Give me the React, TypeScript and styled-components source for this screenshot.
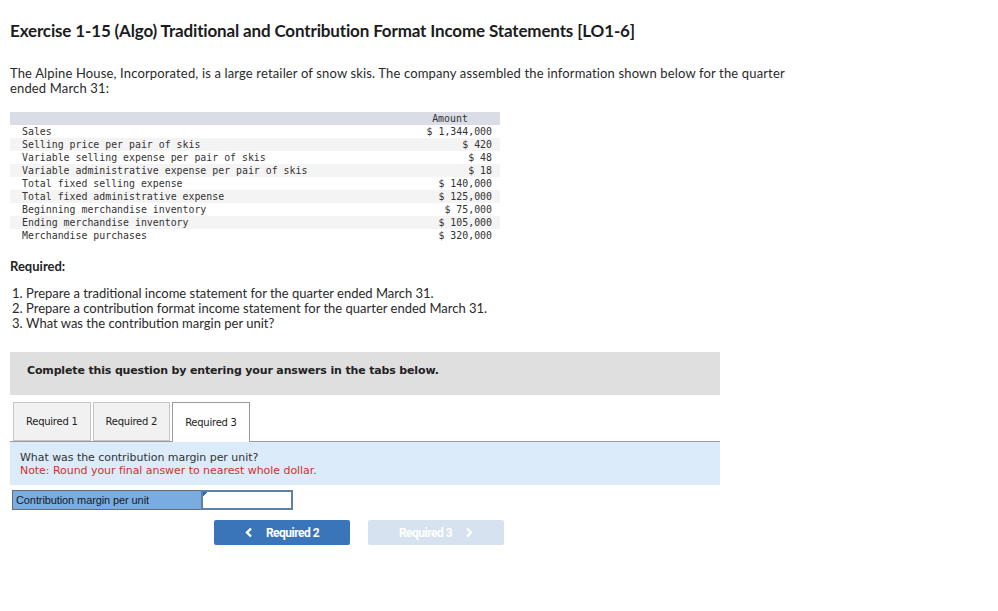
import React, { useState } from "react";
import styled, { createGlobalStyle } from "styled-components";

const GlobalStyle = createGlobalStyle`
  html, body {
    margin: 0;
    padding: 0;
    background: #fff;
  }
  body {
    font-family: Lato, "Open Sans", sans-serif;
    color: #222;
  }
`;

const rows: [string, string][] = [
  ["Sales", "$ 1,344,000"],
  ["Selling price per pair of skis", "$ 420"],
  ["Variable selling expense per pair of skis", "$ 48"],
  ["Variable administrative expense per pair of skis", "$ 18"],
  ["Total fixed selling expense", "$ 140,000"],
  ["Total fixed administrative expense", "$ 125,000"],
  ["Beginning merchandise inventory", "$ 75,000"],
  ["Ending merchandise inventory", "$ 105,000"],
  ["Merchandise purchases", "$ 320,000"],
];

const tabs = ["Required 1", "Required 2", "Required 3"];

const Chevron = ({ dir }: { dir: "left" | "right" }) => (
  <svg width="8" height="11" viewBox="0 0 8 11">
    <polyline
      points={dir === "left" ? "6,1.5 2,5.5 6,9.5" : "2,1.5 6,5.5 2,9.5"}
      fill="none"
      stroke="#fff"
      strokeWidth="2.4"
    />
  </svg>
);

const App: React.FC = () => {
  const [active, setActive] = useState(2);
  const [answer, setAnswer] = useState("");

  return (
    <Page>
      <GlobalStyle />
      <Title>Exercise 1-15 (Algo) Traditional and Contribution Format Income Statements [LO1-6]</Title>
      <Intro>
        The Alpine House, Incorporated, is a large retailer of snow skis. The company assembled the information shown below for the quarter
        <br />
        ended March 31:
      </Intro>

      <DataTable>
        <thead>
          <tr>
            <HeadCell />
            <HeadCell $amount>Amount</HeadCell>
          </tr>
        </thead>
        <tbody>
          {rows.map(([label, value]) => (
            <Row key={label}>
              <LabelCell>{label}</LabelCell>
              <AmountCell>{value}</AmountCell>
            </Row>
          ))}
        </tbody>
      </DataTable>

      <RequiredHead>Required:</RequiredHead>
      <TaskList>
        <li>Prepare a traditional income statement for the quarter ended March 31.</li>
        <li>Prepare a contribution format income statement for the quarter ended March 31.</li>
        <li>What was the contribution margin per unit?</li>
      </TaskList>

      <Instruction>Complete this question by entering your answers in the tabs below.</Instruction>

      <TabBar>
        {tabs.map((t, i) => (
          <Tab key={t} $active={i === active} onClick={() => setActive(i)}>
            {t}
          </Tab>
        ))}
      </TabBar>

      <QuestionPanel>
        <Question>What was the contribution margin per unit?</Question>
        <Note>Note: Round your final answer to nearest whole dollar.</Note>
      </QuestionPanel>

      <AnswerRow>
        <AnswerLabel>Contribution margin per unit</AnswerLabel>
        <AnswerInput value={answer} onChange={(e) => setAnswer(e.target.value)} />
      </AnswerRow>

      <NavRow>
        <NavButton>
          <Chevron dir="left" />
          Required 2
        </NavButton>
        <NavButton $disabled>
          Required 3
          <Chevron dir="right" />
        </NavButton>
      </NavRow>
    </Page>
  );
};

const Page = styled.div`
  padding: 0 10px;
  width: 710px;
`;

const Title = styled.h1`
  margin: 21px 0 0;
  font-size: 17px;
  line-height: 20px;
  font-weight: 700;
  color: #1c1c1c;
  white-space: nowrap;
  letter-spacing: -0.15px;
`;

const Intro = styled.p`
  margin: 25px 0 0;
  font-size: 13px;
  line-height: 15px;
  letter-spacing: 0.15px;
  color: #2a2a2a;
  white-space: nowrap;
`;

const DataTable = styled.table`
  margin-top: 16px;
  width: 490px;
  border-collapse: collapse;
  font-family: "DejaVu Sans Mono", "Liberation Mono", monospace;
  font-size: 9.9px;
  color: #333;
`;

const HeadCell = styled.th<{ $amount?: boolean }>`
  background: #dadde6;
  height: 13px;
  padding: 0;
  font-weight: 400;
  line-height: 13px;
  text-align: center;
  width: ${(p) => (p.$amount ? "100px" : "auto")};
`;

const Row = styled.tr`
  height: 13px;
  &:nth-child(even) {
    background: #f4f4f4;
  }
`;

const LabelCell = styled.td`
  padding: 0 0 0 12px;
  line-height: 13px;
  white-space: pre;
`;

const AmountCell = styled.td`
  padding: 0 8px 0 0;
  line-height: 13px;
  text-align: right;
  white-space: pre;
`;

const RequiredHead = styled.h3`
  margin: 17px 0 0;
  font-size: 13px;
  line-height: 15px;
  font-weight: 700;
`;

const TaskList = styled.ol`
  margin: 12px 0 0;
  padding-left: 16px;
  font-size: 13px;
  line-height: 15px;
  color: #2a2a2a;
`;

const Instruction = styled.div`
  margin-top: 21px;
  height: 43px;
  box-sizing: border-box;
  padding: 12px 0 0 17px;
  background: #dfdfdf;
  font-family: "DejaVu Sans", Verdana, sans-serif;
  font-size: 11px;
  font-weight: 700;
  line-height: 14px;
  letter-spacing: -0.15px;
  color: #222;
`;

const TabBar = styled.div`
  margin-top: 7px;
  display: flex;
  align-items: flex-end;
  gap: 2px;
  padding-left: 3px;
  border-bottom: 1px solid #9a9a9a;
`;

const Tab = styled.div<{ $active?: boolean }>`
  box-sizing: border-box;
  height: ${(p) => (p.$active ? "40px" : "39px")};
  margin-bottom: ${(p) => (p.$active ? "-1px" : "0")};
  padding: 0 12px;
  display: flex;
  align-items: center;
  background: ${(p) => (p.$active ? "#fff" : "#f1f1f1")};
  border: 1px solid ${(p) => (p.$active ? "#9a9a9a" : "#c6c6c6")};
  border-bottom: ${(p) => (p.$active ? "none" : "1px solid #c6c6c6")};
  font-family: "DejaVu Sans", Verdana, sans-serif;
  font-size: 10px;
  letter-spacing: -0.25px;
  color: #222;
  cursor: pointer;
`;

const QuestionPanel = styled.div`
  height: 43px;
  box-sizing: border-box;
  padding: 9px 10px 0;
  background: #dbebf9;
  font-family: "DejaVu Sans", Verdana, sans-serif;
  font-size: 11px;
  line-height: 13px;
  letter-spacing: -0.05px;
`;

const Question = styled.div`
  color: #333;
`;

const Note = styled.div`
  color: #d0312d;
`;

const AnswerRow = styled.div`
  margin: 5px 0 0 2px;
  display: flex;
  height: 20px;
`;

const AnswerLabel = styled.div`
  box-sizing: border-box;
  width: 189px;
  padding: 0 3px;
  display: flex;
  align-items: center;
  background: #79ade2;
  border: 1px solid #6b6b6b;
  border-right: none;
  font-family: "Liberation Sans", Arial, sans-serif;
  font-size: 11px;
  letter-spacing: -0.1px;
  color: #1a1a1a;
`;

const AnswerInput = styled.input`
  box-sizing: border-box;
  width: 92px;
  height: 20px;
  margin: 0;
  border: 2px solid #5f7fa6;
  padding: 0 4px;
  outline: none;
  background: linear-gradient(135deg, #2f6db5 0 3px, #fff 3px);
`;

const NavRow = styled.div`
  margin-top: 10px;
  display: flex;
  justify-content: center;
  gap: 18px;
  padding-right: 12px;
`;

const NavButton = styled.button<{ $disabled?: boolean }>`
  width: 136px;
  height: 25px;
  border: none;
  border-radius: 2px;
  display: flex;
  align-items: center;
  justify-content: center;
  gap: 13px;
  background: ${(p) => (p.$disabled ? "#d6e2f0" : "#3a75b9")};
  color: #fff;
  font-family: Roboto, "Liberation Sans", sans-serif;
  font-size: 12px;
  font-weight: 700;
  letter-spacing: -0.5px;
  cursor: ${(p) => (p.$disabled ? "default" : "pointer")};
`;

export default App;
